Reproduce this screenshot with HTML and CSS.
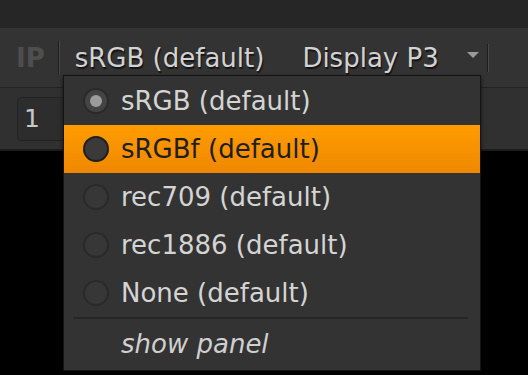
FILE: index.html
```html
<!DOCTYPE html>
<html lang="en">
<head>
    <meta charset="UTF-8">
    <title>Viewer Colorspace</title>
    <link rel="stylesheet" href="styles.css">
</head>
<body>
    <div class="titlebar"></div>
    <div class="toolbar">
        <span class="ip">IP</span>
        <span class="sep"></span>
        <span class="combo">sRGB (default)</span>
        <span class="combo display">Display P3</span>
        <span class="arrow"></span>
        <span class="sep"></span>
    </div>
    <div class="viewer-row">
        <div class="frame-box">1</div>
    </div>
    <div class="viewer"></div>

    <ul class="menu">
        <li class="menu-item"><span class="radio checked"></span>sRGB (default)</li>
        <li class="menu-item active"><span class="radio"></span>sRGBf (default)</li>
        <li class="menu-item"><span class="radio"></span>rec709 (default)</li>
        <li class="menu-item"><span class="radio"></span>rec1886 (default)</li>
        <li class="menu-item"><span class="radio"></span>None (default)</li>
        <li class="menu-sep"></li>
        <li class="menu-item panel">show panel</li>
    </ul>
</body>
</html>
```

FILE: styles.css
```css
body {
    margin: 0;
    width: 528px;
    height: 375px;
    overflow: hidden;
    background-color: #000;
    font-family: 'DejaVu Sans', Verdana, sans-serif;
    font-size: 26px;
    color: #d2d2d2;
    position: relative;
}
.titlebar {
    height: 28px;
    background-color: #262626;
}
.toolbar {
    height: 60px;
    box-sizing: border-box;
    background-color: #333;
    border-bottom: 1px solid #242424;
    display: flex;
    align-items: center;
}
.ip {
    margin-left: 16px;
    font-weight: bold;
    color: #4e4e4e;
}
.sep {
    width: 1px;
    height: 34px;
    background-color: #1e1e1e;
    border-right: 1px solid #484848;
    margin-left: 13px;
}
.combo {
    margin-left: 15px;
    text-shadow: 1px 2px 1px #141414;
}
.combo.display {
    margin-left: 38px;
}
.arrow {
    width: 0;
    height: 0;
    border-left: 6px solid transparent;
    border-right: 6px solid transparent;
    border-top: 6px solid #9a9a9a;
    margin-left: 28px;
    margin-top: -6px;
}
.toolbar .arrow + .sep {
    margin-left: 8px;
    height: 28px;
}
.viewer-row {
    height: 61px;
    background-color: #303030;
    border-bottom: 2px solid #1c1c1c;
    display: flex;
    align-items: center;
}
.frame-box {
    margin-left: 17px;
    width: 80px;
    height: 44px;
    box-sizing: border-box;
    border: 1px solid #232323;
    border-radius: 4px;
    background-color: #2d2d2d;
    padding-left: 6px;
    line-height: 42px;
    font-size: 25px;
    color: #c8c8c8;
}
.menu {
    position: absolute;
    left: 63px;
    top: 75px;
    width: 418px;
    box-sizing: border-box;
    margin: 0;
    padding: 1px 0 1px;
    list-style: none;
    background-color: #333;
    border: 1px solid #141414;
    box-shadow: 0 2px 4px rgba(0, 0, 0, 0.6);
}
.menu-item {
    height: 48px;
    display: flex;
    align-items: center;
    padding-left: 19px;
    color: #d4d4d4;
}
.menu-item.active {
    background: linear-gradient(#ff9c00, #ef8800);
    color: #1e1e1e;
}
.radio {
    width: 26px;
    height: 26px;
    box-sizing: border-box;
    border-radius: 50%;
    border: 2px solid #2a2a2a;
    background-color: #373737;
    margin-right: 12px;
    display: flex;
    align-items: center;
    justify-content: center;
}
.menu-item.active .radio {
    border-color: #1f1f1f;
    background-color: #3a3a3a;
}
.radio.checked {
    background-color: #444;
    border-color: #2a2a2a;
}
.radio.checked::after {
    content: "";
    width: 12px;
    height: 12px;
    border-radius: 50%;
    background-color: #9c9c9c;
}
.menu-sep {
    height: 2px;
    margin: 0 12px 0 9px;
    background-color: #262626;
}
.menu-item.panel {
    height: 50px;
    padding-left: 57px;
    font-style: italic;
    color: #cfcfcf;
}
```
